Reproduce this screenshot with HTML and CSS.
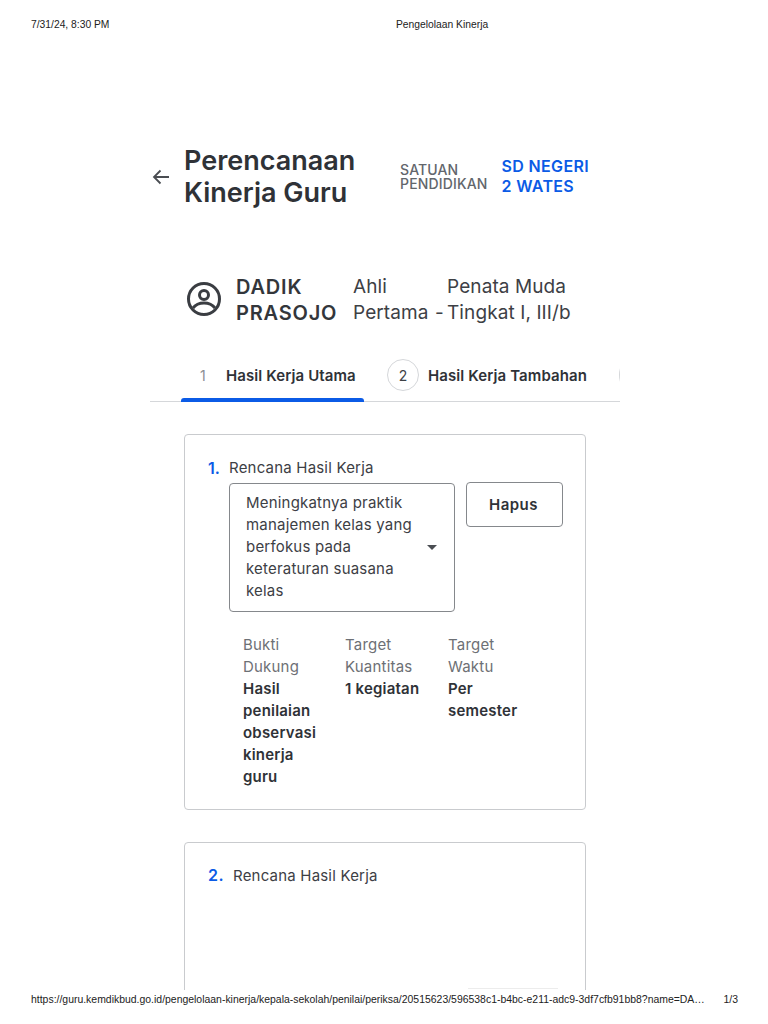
FILE: index.html
```html
<!DOCTYPE html>
<html lang="id">
<head>
<meta charset="utf-8">
<title>Pengelolaan Kinerja</title>
<link rel="stylesheet" href="styles.css">
</head>
<body>
<div class="sheet">
  <header class="print-head">
    <span class="print-date">7/31/24, 8:30 PM</span>
    <span class="print-title">Pengelolaan Kinerja</span>
  </header>
  <main class="content">
    <section class="page-head">
      <svg class="back" viewBox="0 0 24 24" width="24" height="24"><path d="M20 12H5M11.500 5.500 5 12l6.500 6.500" fill="none" stroke="#4a4d52" stroke-width="1.800"/></svg>
      <h1 class="page-title">Perencanaan Kinerja Guru</h1>
      <div class="unit-label">SATUAN PENDIDIKAN</div>
      <div class="unit-name">SD NEGERI 2 WATES</div>
    </section>
    <section class="person">
      <svg class="avatar" viewBox="0 0 36 36" width="36" height="36"><circle cx="18" cy="18" r="15.500" fill="none" stroke="#3a3d42" stroke-width="3"/><circle cx="18" cy="14" r="4.500" fill="none" stroke="#3a3d42" stroke-width="3"/><path d="M7 27c3-4 7-5 11-5s8 1 11 5" fill="none" stroke="#3a3d42" stroke-width="3"/></svg>
      <div class="person-name">DADIK PRASOJO</div>
      <div class="person-role">Ahli Pertama</div>
      <div class="person-dash">-</div>
      <div class="person-rank">Penata Muda Tingkat I, III/b</div>
    </section>
    <nav class="tabs">
      <div class="tab tab-active"><span class="tab-num">1</span><span class="tab-text">Hasil Kerja Utama</span></div>
      <div class="tab"><span class="tab-num tab-circle">2</span><span class="tab-text">Hasil Kerja Tambahan</span></div>
      <div class="tab-next"></div>
    </nav>
    <section class="card">
      <div class="card-row">
        <div class="index">1.</div>
        <div class="card-body">
          <div class="field-label">Rencana Hasil Kerja</div>
          <div class="field-row">
            <div class="select">
              <span class="select-text">Meningkatnya praktik manajemen kelas yang berfokus pada keteraturan suasana kelas</span>
              <span class="caret"></span>
            </div>
            <button class="delete">Hapus</button>
          </div>
        </div>
      </div>
      <div class="details">
        <div class="detail detail-a"><div class="detail-key">Bukti Dukung</div><div class="detail-val">Hasil penilaian observasi kinerja guru</div></div>
        <div class="detail detail-b"><div class="detail-key">Target Kuantitas</div><div class="detail-val">1 kegiatan</div></div>
        <div class="detail detail-c"><div class="detail-key">Target Waktu</div><div class="detail-val">Per semester</div></div>
      </div>
    </section>
    <section class="card card-cut">
      <div class="card-row card-row-2">
        <div class="index index-2">2.</div>
        <div class="field-label">Rencana Hasil Kerja</div>
      </div>
    </section>
  </main>
  <footer class="print-foot">
    <span class="print-url">https://guru.kemdikbud.go.id/pengelolaan-kinerja/kepala-sekolah/penilai/periksa/20515623/596538c1-b4bc-e211-adc9-3df7cfb91bb8?name=DA…</span>
    <span class="print-page">1/3</span>
  </footer>
</div>
</body>
</html>
```
FILE: styles.css
```css
* { box-sizing: border-box; }
html, body { margin: 0; padding: 0; background: #fff; }
body { font-family: Inter, "Liberation Sans", sans-serif; color: #2f3237; }
.sheet { width: 768px; height: 1024px; display: flex; flex-direction: column; overflow: hidden; }

.print-head { display: flex; height: 48px; padding: 18px 0 0 31px; font: 10.300px/13px "Liberation Sans", sans-serif; color: #222; }
.print-date { width: 365px; flex: none; }

.content { width: 470px; margin-left: 150px; height: 942px; overflow: hidden; flex: none; }

.page-head { display: flex; align-items: center; height: 64px; margin-top: 97px; }
.back { flex: none; margin: 0 11px 1px -1px; }
.page-title { margin: 0; width: 216px; flex: none; font-size: 27px; line-height: 32px; font-weight: 600; color: #2f3237; }
.unit-label { width: 101.500px; flex: none; font-size: 14px; line-height: 14.500px; font-weight: 500; letter-spacing: .15px; color: #62666c; }
.unit-name { width: 94px; flex: none; margin-bottom: 2px; font-size: 16px; line-height: 20px; font-weight: 600; letter-spacing: .35px; color: #0b5be6; }

.person { display: flex; align-items: center; margin: 65px 0 0 36px; height: 52px; font-size: 19px; line-height: 26px; }
.avatar { flex: none; margin: 0 14px 2px 0; }
.person-name { width: 117px; flex: none; font-size: 20px; font-weight: 600; letter-spacing: .8px; color: #33363b; }
.person-role { width: 82px; flex: none; letter-spacing: .1px; color: #3d4045; }
.person-dash { width: 12px; flex: none; margin-top: 26px; color: #3d4045; }
.person-rank { width: 130px; flex: none; letter-spacing: .1px; color: #3d4045; }

.tabs { display: flex; margin-top: 23px; height: 53px; border-bottom: 1px solid #d5d7da; position: relative; }
.tab { display: flex; align-items: center; height: 52px; font-size: 15px; font-weight: 600; letter-spacing: .1px; color: #2f3237; }
.tab-active { position: relative; width: 183px; margin-left: 31px; padding-left: 15px; margin-right: 24px; }
.tab-active::after { content: ""; position: absolute; left: 0; right: 0; bottom: -1px; height: 4px; background: #0b5be6; border-radius: 3px 3px 0 0; }
.tab-num { flex: none; width: 32px; height: 32px; margin-right: 9px; display: flex; align-items: center; justify-content: center; font-size: 14px; font-weight: 400; }
.tab-active .tab-num { width: 14px; margin-right: 16px; color: #8b8e93; }
.tab-circle { border: 1px solid #d5d7da; border-radius: 50%; margin-left: -1px; color: #3d4045; }
.tab-next { position: absolute; left: 469px; top: 17px; width: 6px; height: 18px; border: 1px solid #d5d7da; border-radius: 50%; }

.card { width: 402px; margin: 32px 0 0 34px; border: 1px solid #c9cbce; border-radius: 4px; padding: 22px 22px 21px 23px; font-size: 15px; line-height: 22px; letter-spacing: .2px; }
.card-row { display: flex; }
.index { width: 21px; flex: none; font-size: 16px; font-weight: 600; color: #0b5be6; letter-spacing: 0; }
.card-body { flex: 1; }
.field-label { color: #3d4045; }
.field-row { display: flex; align-items: flex-start; gap: 11px; margin-top: 4px; }
.select { width: 226px; flex: none; display: flex; align-items: center; padding: 8px 17px 9px 16px; border: 1px solid #85888c; border-radius: 4px; color: #3d4045; }
.select-text { flex: 1; }
.caret { flex: none; width: 0; height: 0; margin-left: 12px; border: 5px solid transparent; border-top-color: #4a4d52; border-bottom: 0; }
.delete { width: 97px; height: 45px; margin-top: -1px; padding: 0 2px 0 0; background: #fff; border: 1px solid #85888c; border-radius: 4px; font: 600 15px Inter, sans-serif; letter-spacing: .5px; color: #2f3237; }

.details { display: flex; margin: 22px 0 0 35px; }
.detail-a { width: 102px; padding-right: 24px; }
.detail-b { width: 103px; }
.detail-c { width: 90px; }
.detail-key { color: #6d7075; }
.detail-val { font-weight: 600; color: #2f3237; }

.card-cut { position: relative; height: 200px; padding-top: 21px; }
.card-cut::after { content: ""; position: absolute; left: 283px; top: 145px; width: 90px; height: 1px; background: #ececec; }
.card-row-2 { align-items: baseline; }
.index-2 { width: 25px; letter-spacing: .5px; }

.print-foot { display: flex; justify-content: space-between; padding: 3px 30px 0 31px; height: 34px; background: #fff; font: 10.450px/13px "Liberation Sans", sans-serif; color: #222; }
```
